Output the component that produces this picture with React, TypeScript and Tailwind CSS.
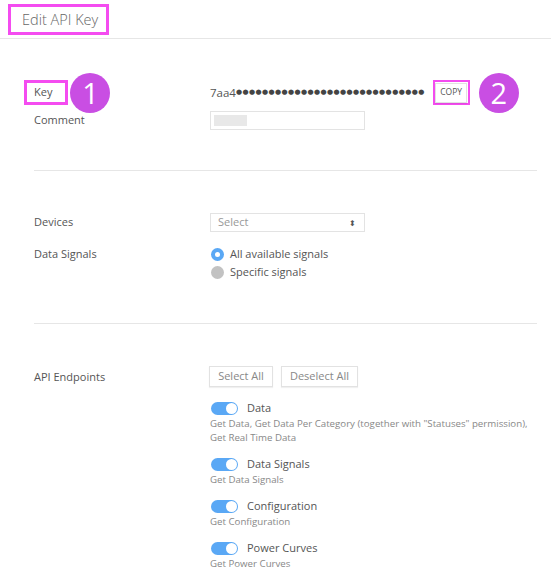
import React from "react";

const MAGENTA = "border-[#f44cf0]";

const endpoints = [
  {
    name: "Data",
    desc: ['Get Data, Get Data Per Category (together with "Statuses" permission),', "Get Real Time Data"],
  },
  { name: "Data Signals", desc: ["Get Data Signals"] },
  { name: "Configuration", desc: ["Get Configuration"] },
  { name: "Power Curves", desc: ["Get Power Curves"] },
];

function Badge({ n }: { n: number }) {
  return (
    <span className="flex h-[40px] w-[40px] items-center justify-center rounded-full bg-[#c94ee3] text-[29px] leading-none text-white">
      {n}
    </span>
  );
}

function Toggle() {
  return (
    <span className="flex h-[13px] w-[27px] shrink-0 items-center justify-end rounded-full bg-[#5aa8f5] pr-[1px]">
      <span className="h-[11px] w-[11px] rounded-full bg-white" />
    </span>
  );
}

function Radio({ checked }: { checked: boolean }) {
  return checked ? (
    <span className="flex h-[13px] w-[13px] items-center justify-center rounded-full bg-[#5aa8f5]">
      <span className="h-[5px] w-[5px] rounded-full bg-white" />
    </span>
  ) : (
    <span className="h-[13px] w-[13px] rounded-full bg-[#c2c2c2]" />
  );
}

export default function App() {
  return (
    <div className="min-h-[580px] w-[551px] bg-white font-['Open_Sans',sans-serif] text-[11px] text-[#555]">
      <header className="h-[39px] border-b border-[#e6e6e6] pl-[8px] pt-[4px]">
        <h1 className={`inline-flex h-[31px] items-center border-[3px] ${MAGENTA} pl-[11px] pr-[8px] text-[14.5px] font-light text-[#666]`}>
          Edit API Key
        </h1>
      </header>

      <div className="pl-[34px] pr-[14px]">
        <section className="pt-[41px]">
          <div className="flex h-[25px] items-center">
            <div className="flex w-[176px] shrink-0 items-center">
              <span className={`-ml-[10px] flex h-[25px] items-center border-[3px] ${MAGENTA} pl-[7px] pr-[13px]`}>Key</span>
              <span className="ml-[2px]">
                <Badge n={1} />
              </span>
            </div>
            <span className="text-[11.5px]">7aa4</span>
            <span className="font-['DejaVu_Sans',sans-serif] text-[7px] tracking-[0.4px] text-[#444]">
              {"●".repeat(29)}
            </span>
            <span className={`ml-[8px] flex h-[25px] w-[37px] shrink-0 items-center justify-center border-[2px] ${MAGENTA}`}>
              <span className="flex h-[20px] w-[32px] items-center justify-center border border-[#e2e2e2] bg-white text-[8.5px] text-[#555] shadow-[0_1px_1px_rgba(0,0,0,0.06)]">
                COPY
              </span>
            </span>
            <span className="ml-[9px]">
              <Badge n={2} />
            </span>
          </div>
          <div className="mt-[6px] flex h-[18px] items-center">
            <span className="w-[176px] shrink-0">Comment</span>
            <div className="flex h-[19px] w-[155px] items-center border border-[#e3e3e3] pl-[3px]">
              <span className="h-[11px] w-[33px] bg-[#e8e8e8]" />
            </div>
          </div>
        </section>

        <hr className="mt-[41px] border-t border-[#e6e6e6]" />

        <section className="pt-[42px]">
          <div className="flex h-[19px] items-center">
            <span className="w-[176px] shrink-0">Devices</span>
            <div className="flex h-[19px] w-[155px] items-center justify-between border border-[#e3e3e3] pl-[7px] pr-[8px] text-[#999]">
              <span>Select</span>
              <span className="text-[8px] leading-none text-[#555]">⬍</span>
            </div>
          </div>
          <div className="mt-[13px] flex">
            <span className="w-[176px] shrink-0 leading-[17px]">Data Signals</span>
            <div className="flex flex-col">
              <label className="flex h-[18px] items-center gap-[6px] pl-[1px]">
                <Radio checked />
                All available signals
              </label>
              <label className="flex h-[18px] items-center gap-[6px] pl-[1px]">
                <Radio checked={false} />
                Specific signals
              </label>
            </div>
          </div>
        </section>

        <hr className="mt-[42px] border-t border-[#e6e6e6]" />

        <section className="pt-[42px]">
          <div className="flex">
            <span className="w-[176px] shrink-0 pt-[3px]">API Endpoints</span>
            <div className="flex flex-col">
              <div className="-ml-[1px] flex gap-[8px]">
                <button className="h-[21px] w-[64px] border border-[#e2e2e2] text-[#888] shadow-[0_1px_1px_rgba(0,0,0,0.06)]">
                  Select All
                </button>
                <button className="h-[21px] w-[77px] border border-[#e2e2e2] text-[#888] shadow-[0_1px_1px_rgba(0,0,0,0.06)]">
                  Deselect All
                </button>
              </div>
              {endpoints.map((e, i) => (
                <div key={e.name} className={i === 0 ? "mt-[13px]" : "mt-[11px]"}>
                  <div className="flex h-[16px] items-center gap-[9px] pl-[1px]">
                    <Toggle />
                    <span>{e.name}</span>
                  </div>
                  <div className="mt-[1px] text-[9.7px] leading-[14px] text-[#888]">
                    {e.desc.map((d) => (
                      <div key={d} className="whitespace-nowrap">{d}</div>
                    ))}
                  </div>
                </div>
              ))}
            </div>
          </div>
        </section>
      </div>
    </div>
  );
}
